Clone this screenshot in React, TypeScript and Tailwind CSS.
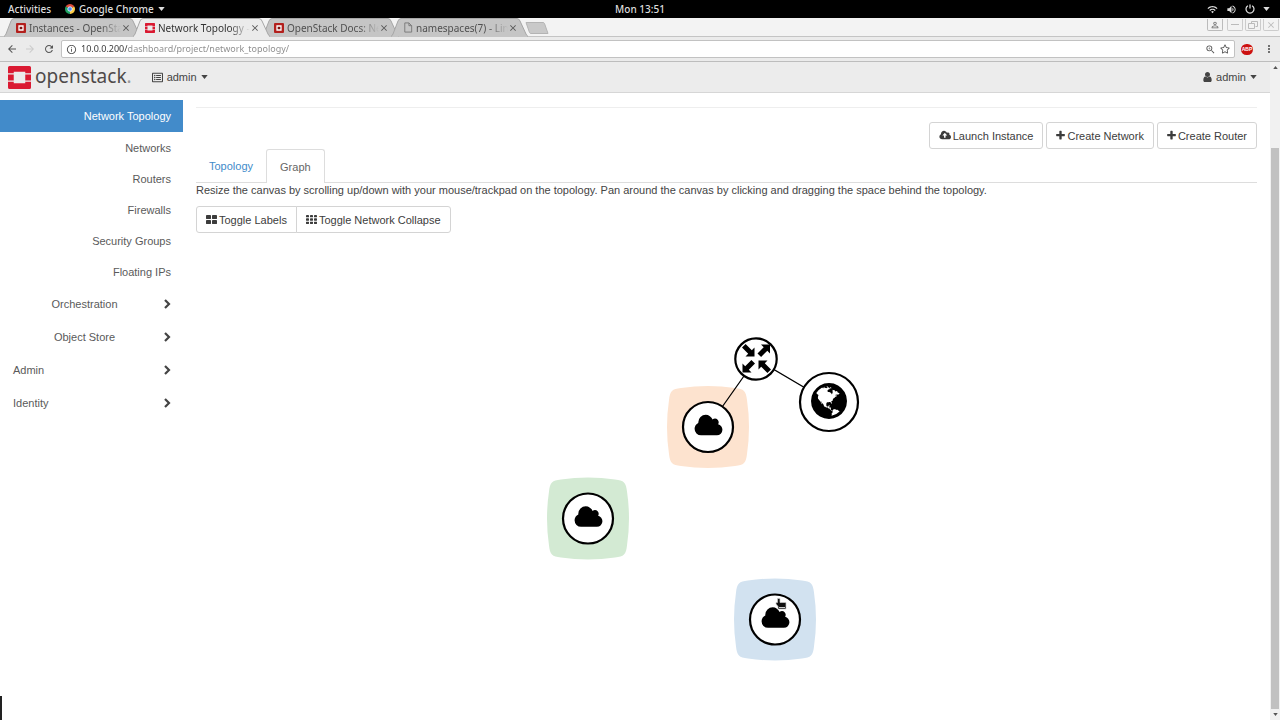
import React from "react";
import { FaRegListAlt, FaRegStar } from "react-icons/fa";
import { MdRefresh, MdArrowBack, MdArrowForward, MdMoreVert, MdClose, MdWifi, MdVolumeUp, MdZoomIn, MdInfoOutline, MdPersonOutline } from "react-icons/md";

const CLOUD =
  "M1984 1152q0 159-112.500 271.500t-271.500 112.500h-1088q-185 0-316.500-131.500t-131.500-316.500q0-132 71-241.500t187-163.500q-2-28-2-43 0-212 150-362t362-150q158 0 286.500 88t187.500 230q70-62 166-62 106 0 181 75t75 181q0 75-41 138 129 30 213 134.500t84 239.500z";
const CLOUD_UPLOAD =
  "M1344 864q0-14-9-23l-352-352q-9-9-23-9t-23 9l-351 351q-10 12-10 24 0 14 9 23t23 9h224v352q0 13 9.500 22.500t22.500 9.500h192q13 0 22.500-9.500t9.500-22.500v-352h224q13 0 22.500-9.500t9.500-22.500zm640 288q0 159-112.500 271.500t-271.500 112.500h-1088q-185 0-316.500-131.500t-131.500-316.500q0-130 70-240t188-165q-2-30-2-43 0-212 150-362t362-150q156 0 285.500 87t188.500 231q71-62 166-62 106 0 181 75t75 181q0 76-41 138 130 31 213.500 135.500t83.500 238.500z";
const PLUS =
  "M1600 736v192q0 40-28 68t-68 28h-416v416q0 40-28 68t-68 28h-192q-40 0-68-28t-28-68v-416h-416q-40 0-68-28t-28-68v-192q0-40 28-68t68-28h416v-416q0-40 28-68t68-28h192q40 0 68 28t28 68v416h416q40 0 68 28t28 68z";
const USER =
  "M1536 1399q0 109-62.500 187t-150.500 78h-854q-88 0-150.500-78t-62.500-187q0-85 8.500-160.500t31.500-152 58.500-131 94-89 134.500-34.500q131 128 313 128t313-128q76 0 134.500 34.500t94 89 58.500 131 31.500 152 8.500 160.500zm-256-887q0 159-112.500 271.500t-271.500 112.500-271.500-112.500-112.500-271.500 112.500-271.500 271.500-112.500 271.500 112.500 112.500 271.500z";
const GLOBE =
  "M896 128q209 0 385.500 103t279.500 279.500 103 385.500-103 385.500-279.500 279.500-385.500 103-385.500-103-279.500-279.500-103-385.500 103-385.500 279.500-279.500 385.500-103zm274 521q-2 1-9.500 9.500t-13.500 9.500q2 0 4.500-5t5-11 3.500-7q6-7 22-15 14-6 52-12 34-8 51 11-2-2 9.500-13t14.500-12q3-2 15-4.500t15-7.500l2-22q-12 1-17.500-7t-6.500-21q0 2-6 8 0-7-4.500-8t-11.500 1-9 1q-10-3-15-7.500t-8-16.500-4-15q-2-5-9.500-10.500t-9.500-10.500q-1-2-2.500-5.500t-3-6.500-4-5.500-5.500-2.500-7 5-7.500 10-4.500 5q-3-2-6-1.500t-4.500 1-4.500 3-5 3.500q-3 2-8.500 3t-8.500 2q15-5-1-11-10-4-16-3 9-4 7.500-12t-8.500-14h5q-1-4-8.500-8.500t-17.500-8.500-13-6q-8-5-34-9.500t-33-.5q-5 6-4.500 10.500t4 14 3.500 12.500q1 6-5.500 13t-6.500 12q0 7 14 15.500t10 21.500q-3 8-16 16t-16 12q-5 8-1.500 18.500t10.500 16.500q2 2 1.500 4t-3.500 4.500-5.500 4-6.500 3.500l-3 2q-11 5-20.500-6t-13.500-26q-7-25-16-30-23-8-29 1-5-13-41-26-25-9-58-4 6-1 0-15-7-15-19-12 3-6 4-17.500t1-13.500q3-13 12-23 1-1 7-8.500t9.500-13.500.5-6q35 4 50-11 5-5 11.500-17t10.500-17q9-6 14-5.500t14.500 5.500 14.500 5q14 1 15.500-11t-7.500-20q12 1 3-17-4-7-8-9-12-4-27 5-8 4 2 8-1-1-9.500 10.500t-16.500 17.500-16-5q-1-1-5.500-13.500t-9.500-13.500q-8 0-16 15 3-8-11-15t-24-8q19-12-8-27-7-4-20.500-5t-19.500 4q-5 7-5.500 11.500t5 8 10.500 5.500 11.500 4 8.500 3q14 10 8 14-2 1-8.500 3.500t-11.500 4.500-6 4q-3 4 0 14t-2 14q-5-5-9-17.500t-7-16.500q7 9-25 6l-10-1q-4 0-16 2t-20.500 1-13.500-8q-4-8 0-20 1-4 4-2-4-3-11-9.500t-10-8.500q-46 15-94 41 6 1 12-1 5-2 13-6.500t10-5.500q34-14 42-7l5-5q14 16 20 25-7-4-30-1-20 6-22 12 7 12 5 18-4-3-11.500-10t-14.500-11-15-5q-16 0-22 1-146 80-235 222 7 7 12 8 4 1 5 9t2.500 11 11.500-3q9 8 3 19 1-1 44 27 19 17 21 21 3 11-10 18-1-2-9-9t-9-4q-3 5 .5 18.500t10.500 12.500q-7 0-9.500 16t-2.500 35.500-1 23.500l2 1q-3 12 5.500 34.500t21.500 19.500q-13 3 20 43 6 8 8 9 3 2 12 7.500t15 10 10 10.500q4 5 10 22.500t14 23.500q-2 6 9.500 20t10.500 23q-1 0-2.500 1t-2.500 1q3 7 15.500 14t15.500 13q1 3 2 10t3 11 8 2q2-20-24-62-15-25-17-29-3-5-5.500-15.500t-4.500-14.500q2 0 6 1.500t8.500 3.500 7.500 4 2 3q-3 7 2 17.500t12 18.500 17 19 12 13q6 6 14 19.500t0 13.500q9 0 20 10.500t17 19.500q5 8 8 26t5 24q2 7 8.500 13.500t12.500 9.500l16 8 13 7q5 2 18.500 10.500t21.500 11.500q10 4 16 4t14.500-2.500 13.500-3.500q15-2 29 15t21 21q36 19 55 11-2 1 .5 7.500t8 15.500 9 14.500 5.500 8.500q5 6 18 15t18 15q6-4 7-9-3 8 7 20t18 10q14-3 14-32-31 15-49-18 0-1-2.500-5.500t-4-8.500-2.500-8.500 0-7.500 5-3q9 0 10-3.500t-2-12.500-4-13q-1-8-11-20t-12-15q-5 9-16 8t-16-9q0 1-1.500 5.500t-1.500 6.500q-13 0-15-1 1-3 2.500-17.500t3.500-22.500q1-4 5.500-12t7.500-14.500 4-12.500-4.500-9.500-17.500-2.500q-19 1-26 20-1 3-3 10.500t-5 11.500-9 7q-7 3-24 2t-24-5q-13-8-22.500-29t-9.500-37q0-10 2.500-26.500t3-25-5.500-24.500q3-2 9-9.500t10-10.500q2-1 4.500-1.500t4.500 0 4-1.500 3-6q-1-1-4-3-3-3-4-3 7 3 28.500-1.500t27.500 1.500q15 11 22-2 0-1-2.500-9.500t-.5-13.500q5 27 29 9 3 3 15.500 5t17.500 5q3 2 7 5.500t5.500 4.500 5-.5 8.500-6.500q10 14 12 24 11 40 19 44 7 3 11 2t4.500-9.500 0-14-1.500-12.500l-1-8v-18l-1-8q-15-3-18.500-12t1.500-18.500 15-18.500q1-1 8-3.500t15.500-6.500 12.500-8q21-19 15-35 7 0 11-9-1 0-5-3t-7.500-5-4.500-2q9-5 2-16 5-3 7.500-11t7.500-10q9 12 21 2 8-8 1-16 5-7 20.500-10.500t18.500-9.500q7 2 8-2t1-12 3-12q4-5 15-9t13-5l17-11q3-4 0-4 18 2 31-11 10-11-6-20 3-6-3-9.500t-15-5.500q3-1 11.500-.5t10.500-1.500q15-10-7-16-17-5-43 12zm-163 877q206-36 351-189-3-3-12.500-4.500t-12.500-3.500q-18-7-24-8 1-7-2.500-13t-8-9-12.500-8-11-7q-2-2-7-6t-7-5.500-7.500-4.500-8.500-2-10 1l-3 1q-3 1-5.500 2.500t-5.500 3-4 3 0 2.500q-21-17-36-22-5-1-11-5.500t-10.500-7-10-1.500-11.500 7q-5 5-6 15t-2 13q-7-5 0-17.500t2-18.500q-3-6-10.500-4.500t-12 4.500-11.500 8.500-9 6.500-8.500 5.500-8.500 7.500q-3 4-6 12t-5 11q-2-4-11.500-6.500t-9.500-5.500q2 10 4 35t5 38q7 31-12 48-27 25-29 40-4 22 12 26 0 7-8 20.500t-7 21.500q0 6 2 16z";
const ARROW = "M0 0H9L6.300 2.700L12.500 8.900L8.900 12.500L2.700 6.300L0 9Z";

function Caret() {
  return (
    <svg viewBox="0 0 8 5" className="h-1 w-[7px]" fill="currentColor" aria-hidden="true">
      <path d="M0 0H8L4 5Z" />
    </svg>
  );
}

function Glyph({ d, wide }: { d: string; wide?: boolean }) {
  return (
    <svg
      viewBox={wide ? "0 0 1984 1792" : "192 0 1408 1792"}
      className={wide ? "h-[11px] w-3" : "h-[11px] w-[9px]"}
      fill="currentColor"
      aria-hidden="true"
    >
      <path d={d} />
    </svg>
  );
}

function Blocks({ cols, rows }: { cols: number; rows: number }) {
  const w = (11 - (cols - 1)) / cols;
  const h = (9 - (rows - 1)) / rows;
  const cells = [];
  for (let r = 0; r < rows; r++)
    for (let c = 0; c < cols; c++)
      cells.push(<rect key={`${r}-${c}`} x={c * (w + 1)} y={r * (h + 1)} width={w} height={h} rx="0.4" />);
  return (
    <svg viewBox="0 0 11 9" className="h-[9px] w-[11px]" fill="currentColor" aria-hidden="true">
      {cells}
    </svg>
  );
}

function OpenStackMark({ className }: { className: string }) {
  return (
    <svg viewBox="0 0 22 22" className={className} fill="#da1a32" aria-hidden="true">
      <path d="M0 7V1.500Q0 0 1.500 0H20.500Q22 0 22 1.500V7H16.500V5.500H5.500V7Z" />
      <path d="M0 15V20.500Q0 22 1.500 22H20.500Q22 22 22 20.500V15H16.500V16.500H5.500V15Z" />
      <path d="M0 8.200H5.500V13.800H0ZM16.500 8.200H22V13.800H16.500Z" />
    </svg>
  );
}

function DocsMark() {
  return (
    <svg viewBox="0 0 10 10" className="size-[10px] shrink-0" aria-hidden="true">
      <rect width="10" height="10" rx="1" fill="#b3201d" />
      <path d="M3 3H7V7H3Z" fill="#7d1512" stroke="#fff" strokeWidth="1.300" />
    </svg>
  );
}

function PageMark() {
  return (
    <svg viewBox="0 0 10 12" className="h-[11px] w-[10px] shrink-0" fill="none" stroke="#777" aria-hidden="true">
      <path d="M1.500 1H6L9 4V11H1.500ZM6 1V4H9" />
    </svg>
  );
}

function BrowserTab({ title, icon, active }: { title: string; icon: React.ReactNode; active?: boolean }) {
  return (
    <div className={active ? "relative z-10 -mr-2 h-[19px] w-[137px]" : "relative -mr-2 h-[19px] w-[137px]"}>
      <svg viewBox="0 0 137 19" preserveAspectRatio="none" className="absolute inset-0 size-full" aria-hidden="true">
        <path
          d="M0 18.500Q1 18 2 16L7 3Q8 0.500 10 0.500H126Q128 0.500 129 3L135 16Q136 18 137 18.500"
          fill={active ? "#ebebeb" : "#c5c5c5"}
          stroke="#a6a6a6"
        />
        {active && <path d="M1 18.500H136" stroke="#ebebeb" />}
      </svg>
      <div className="relative flex h-full items-center pl-3 pr-[10px]">
        {icon}
        <button
          className={
            "ml-[3px] min-w-0 flex-1 overflow-hidden whitespace-nowrap text-left text-[10px] leading-4 [mask-image:linear-gradient(to_right,black_78%,transparent)] " +
            (active ? "text-[#333]" : "text-[#505050]")
          }
        >
          {title}
        </button>
        <button aria-label={`Close ${title}`} className="text-[#555]">
          <MdClose className="size-[10px]" />
        </button>
      </div>
    </div>
  );
}

function SystemBar() {
  return (
    <div className="grid h-[18px] grid-cols-[1fr_auto_1fr] items-center bg-black px-2 text-[10px] leading-4 font-medium text-[#ddd]">
      <div className="flex items-center gap-[14px]">
        <button>Activities</button>
        <button className="flex items-center gap-1">
          <svg viewBox="0 0 20 20" className="size-[10px]" aria-hidden="true">
            <path d="M10 10L1.340 5A10 10 0 0 1 18.660 5Z" fill="#dd4b39" />
            <path d="M10 10L1.340 5A10 10 0 0 0 10 20Z" fill="#1da462" />
            <path d="M10 10L18.660 5A10 10 0 0 1 10 20Z" fill="#ffcd46" />
            <circle cx="10" cy="10" r="4.500" fill="#4c8bf5" stroke="#fff" strokeWidth="1.500" />
          </svg>
          Google Chrome
          <Caret />
        </button>
      </div>
      <span>Mon 13:51</span>
      <button aria-label="System menu" className="mr-[2px] flex items-center gap-2 justify-self-end">
        <MdWifi className="size-[11px]" />
        <MdVolumeUp className="size-[11px]" />
        <svg viewBox="0 0 12 12" className="size-[10px]" fill="none" stroke="currentColor" strokeWidth="1.500" aria-hidden="true">
          <path d="M6 0.500V5.500M3.500 2A4.800 4.800 0 1 0 8.500 2" />
        </svg>
        <Caret />
      </button>
    </div>
  );
}

function WindowButton({ label, children, dark }: { label: string; children: React.ReactNode; dark?: boolean }) {
  return (
    <button
      aria-label={label}
      className={
        "flex h-3 w-4 items-center justify-center rounded-b-xs border border-t-0 " +
        (dark ? "mr-[2px] border-[#bbb] text-[#666]" : "border-[#ccc] text-[#bbb]")
      }
    >
      {children}
    </button>
  );
}

function TabStrip() {
  return (
    <div className="flex h-[19px] justify-between border-b border-[#c4c4c4] bg-[#f3f3f3]">
      <div className="flex pl-1">
        <BrowserTab title="Instances - OpenSta" icon={<DocsMark />} />
        <BrowserTab title="Network Topology -" icon={<OpenStackMark className="size-[10px] shrink-0" />} active />
        <BrowserTab title="OpenStack Docs: Ne" icon={<DocsMark />} />
        <BrowserTab title="namespaces(7) - Lin" icon={<PageMark />} />
        <button aria-label="New tab" className="mt-1 ml-[5px] h-3">
          <svg viewBox="0 0 24 12" className="h-3 w-6" fill="#c9c9c9" stroke="#b4b4b4" aria-hidden="true">
            <path d="M1 0.500H18Q19 0.500 19.500 1.500L23 11.500H6Q5 11.500 4.500 10.500Z" />
          </svg>
        </button>
      </div>
      <div className="flex items-start gap-[2px] pt-px pr-px">
        <WindowButton label="Profile" dark>
          <MdPersonOutline className="size-[10px]" />
        </WindowButton>
        <WindowButton label="Minimize">
          <span className="h-px w-2 bg-current" />
        </WindowButton>
        <WindowButton label="Restore">
          <svg viewBox="0 0 10 8" className="h-2 w-[10px]" fill="none" stroke="currentColor" aria-hidden="true">
            <path d="M3.500 2.500V0.500H9.500V5.500H7.500M0.500 2.500H6.500V7.500H0.500Z" />
          </svg>
        </WindowButton>
        <WindowButton label="Close window">
          <MdClose className="size-[10px]" />
        </WindowButton>
      </div>
    </div>
  );
}

function Toolbar() {
  return (
    <div className="flex h-[25px] items-center border-b border-[#bdbdbd] bg-[#ebebeb] pr-[5px] pl-[6px] text-[#555]">
      <button aria-label="Back" className="mr-[6px]">
        <MdArrowBack className="size-3" />
      </button>
      <button aria-label="Forward" className="mr-[7px] text-[#ccc]">
        <MdArrowForward className="size-3" />
      </button>
      <button aria-label="Reload" className="mr-[6px]">
        <MdRefresh className="size-3" />
      </button>
      <div className="flex h-[18px] flex-1 items-center rounded-xs border border-[#c2c2c2] bg-white px-1">
        <MdInfoOutline className="mr-1 size-[11px]" />
        <input
          aria-label="Address"
          defaultValue="10.0.0.200/dashboard/project/network_topology/"
          className="min-w-0 flex-1 bg-[linear-gradient(to_right,#333_46px,#8a8a8a_46px)] bg-clip-text text-[9px] leading-4 text-transparent outline-none"
        />
        <button aria-label="Zoom" className="mr-1">
          <MdZoomIn className="size-[11px]" />
        </button>
        <button aria-label="Bookmark">
          <FaRegStar className="size-[10px]" />
        </button>
      </div>
      <button aria-label="Ad blocker" className="mr-[10px] ml-[6px] flex h-[11px] w-3 items-center justify-center rounded-full bg-[#cc1111] font-['Liberation_Sans'] text-[5px] leading-none font-bold text-white">
        ABP
      </button>
      <button aria-label="Browser menu">
        <MdMoreVert className="size-3" />
      </button>
    </div>
  );
}

function SiteHeader() {
  return (
    <header className="flex h-[31px] items-center border-b border-[#d6d6d6] bg-[#ececec] pr-[13px] pl-2 text-[#444]">
      <a href="#home" className="flex items-center gap-1">
        <OpenStackMark className="size-[23px]" />
        <span className="pb-[3px] font-['Noto_Sans',sans-serif] text-[19px] leading-6 text-[#4f4a4a]">
          openstack<span className="text-[#999]">.</span>
        </span>
      </a>
      <button className="ml-5 flex items-center gap-1">
        <FaRegListAlt className="size-[11px]" />
        admin
        <Caret />
      </button>
      <button className="ml-auto flex items-center gap-1">
        <svg viewBox="256 128 1280 1536" className="h-[10px] w-[9px]" fill="currentColor" aria-hidden="true">
          <path d={USER} />
        </svg>
        admin
        <Caret />
      </button>
    </header>
  );
}

function Chevron() {
  return (
    <svg viewBox="0 0 7 10" className="h-[10px] w-[7px]" fill="none" stroke="#444" strokeWidth="2.200" aria-hidden="true">
      <path d="M1 1L5 5L1 9" />
    </svg>
  );
}

function Sidebar() {
  const links = ["Networks", "Routers", "Firewalls", "Security Groups", "Floating IPs"];
  const groups = [
    { name: "Orchestration", nested: true },
    { name: "Object Store", nested: true },
    { name: "Admin", nested: false },
    { name: "Identity", nested: false },
  ];
  return (
    <nav className="flex w-[183px] shrink-0 flex-col pt-[7px] text-[#5a5a5a]">
      <a href="#topology" aria-current="page" className="flex h-8 items-center justify-end bg-[#428bca] pr-3 text-white">
        Network Topology
      </a>
      {links.map((l) => (
        <a key={l} href="#panel" className="flex h-[31px] items-center justify-end pr-3">
          {l}
        </a>
      ))}
      {groups.map((g) => (
        <button key={g.name} className="flex h-[33px] items-center pr-3 pl-[13px]">
          <span className={g.nested ? "flex-1 pr-2 text-center" : "flex-1 text-left"}>{g.name}</span>
          <Chevron />
        </button>
      ))}
      <div className="mt-auto h-6 w-[2px] bg-[#222]" />
    </nav>
  );
}

const SQUIRCLE =
  "M-39 -27C-38 -36 -36 -38 -27 -39Q0 -43 27 -39C36 -38 38 -36 39 -27Q43 0 39 27C38 36 36 38 27 39Q0 43 -27 39C-36 38 -38 36 -39 27Q-43 0 -39 -27Z";

const networks = [
  { x: 512, y: 194, fill: "#fde3cf" },
  { x: 392, y: 285.5, fill: "#d3ead3" },
  { x: 579, y: 386.5, fill: "#d2e2f0" },
];

function TopologyGraph() {
  return (
    <svg className="min-h-[487px] w-full flex-1" role="img" aria-label="Network graph">
      {networks.map((n) => (
        <path key={n.fill} d={SQUIRCLE} fill={n.fill} transform={`translate(${n.x} ${n.y})`} />
      ))}
      <path d="M512 194L560 126L633 169" fill="none" stroke="#000" strokeWidth="1.300" />
      {networks.map((n) => (
        <g key={n.fill} transform={`translate(${n.x} ${n.y})`}>
          <circle r="25" fill="#fff" stroke="#000" strokeWidth="2.200" />
          <svg x="-14.500" y="-14" width="30" height="26" viewBox="0 0 2048 1792">
            <path d={CLOUD} />
          </svg>
        </g>
      ))}
      <g transform="translate(560 126)">
        <circle r="20.700" fill="#fff" stroke="#000" strokeWidth="2.200" />
        <path d={ARROW} transform="translate(2.500 1.500)" />
        <path d={ARROW} transform="translate(-1.500 -2.500) rotate(180)" />
        <path d={ARROW} transform="translate(14 -14.500) rotate(90)" />
        <path d={ARROW} transform="translate(-13.500 13.500) rotate(-90)" />
      </g>
      <g transform="translate(633 169)">
        <circle r="29" fill="#fff" stroke="#000" strokeWidth="2.200" />
        <svg x="-18" y="-19" width="36" height="36" viewBox="128 128 1536 1536">
          <path d={GLOBE} />
        </svg>
      </g>
      <g transform="translate(580 365)">
        <path d="M1.500 0.500H4V4.500H10V11H2V8.500L0 6V4.500H1.500Z" fill="#111" stroke="#ccc" strokeWidth="0.700" />
        <path d="M3 9.500H9" stroke="#fff" strokeWidth="0.800" />
      </g>
    </svg>
  );
}

const button = "flex h-[27px] items-center gap-[2px] border border-[#d4d4d4] bg-white px-[9px] text-[#3c3c3c]";

function Main() {
  return (
    <main className="flex min-w-0 flex-1 flex-col pr-[13px] pl-[13px] pt-[14px]">
      <div className="flex justify-end gap-[3px] border-t border-[#eee] pt-[14px]">
        <button className={button + " rounded-[3px]"}>
          <Glyph d={CLOUD_UPLOAD} wide />
          Launch Instance
        </button>
        <button className={button + " rounded-[3px]"}>
          <Glyph d={PLUS} />
          Create Network
        </button>
        <button className={button + " rounded-[3px]"}>
          <Glyph d={PLUS} />
          Create Router
        </button>
      </div>
      <div role="tablist" className="flex h-[34px] border-b border-[#ddd]">
        <button role="tab" aria-selected="false" className="px-[13px] text-[#428bca]">
          Topology
        </button>
        <button role="tab" aria-selected="true" className="-mb-px rounded-t-[3px] border border-b-0 border-[#ddd] bg-white px-[13px] text-[#666]">
          Graph
        </button>
      </div>
      <p className="leading-[15px] text-[#444]">
        Resize the canvas by scrolling up/down with your mouse/trackpad on the topology. Pan around the canvas by clicking and dragging the space behind the topology.
      </p>
      <div className="mt-2 flex">
        <button className={button + " rounded-l-[3px]"}>
          <Blocks cols={2} rows={2} />
          Toggle Labels
        </button>
        <button className={button + " -ml-px rounded-r-[3px]"}>
          <Blocks cols={3} rows={3} />
          Toggle Network Collapse
        </button>
      </div>
      <TopologyGraph />
    </main>
  );
}

export default function App() {
  return (
    <div className="flex min-h-screen flex-col bg-white font-['Noto_Sans',sans-serif]">
      <SystemBar />
      <TabStrip />
      <Toolbar />
      <div className="flex flex-1 font-['Liberation_Sans',Arial,sans-serif] text-[11px] leading-4">
        <div className="flex min-w-0 flex-1 flex-col">
          <SiteHeader />
          <div className="flex flex-1">
            <Sidebar />
            <Main />
          </div>
        </div>
        <div className="flex w-[10px] shrink-0 flex-col items-center bg-[#f1f1f1] text-[#555]" aria-hidden="true">
          <svg viewBox="0 0 6 4" className="my-1 h-[3px] w-[5px]" fill="currentColor">
            <path d="M0 4L3 0L6 4Z" />
          </svg>
          <div className="mt-[75px] w-2 flex-1 bg-[#c1c1c1]" />
          <svg viewBox="0 0 6 4" className="my-1 h-[3px] w-[5px]" fill="currentColor">
            <path d="M0 0L3 4L6 0Z" />
          </svg>
        </div>
      </div>
    </div>
  );
}
